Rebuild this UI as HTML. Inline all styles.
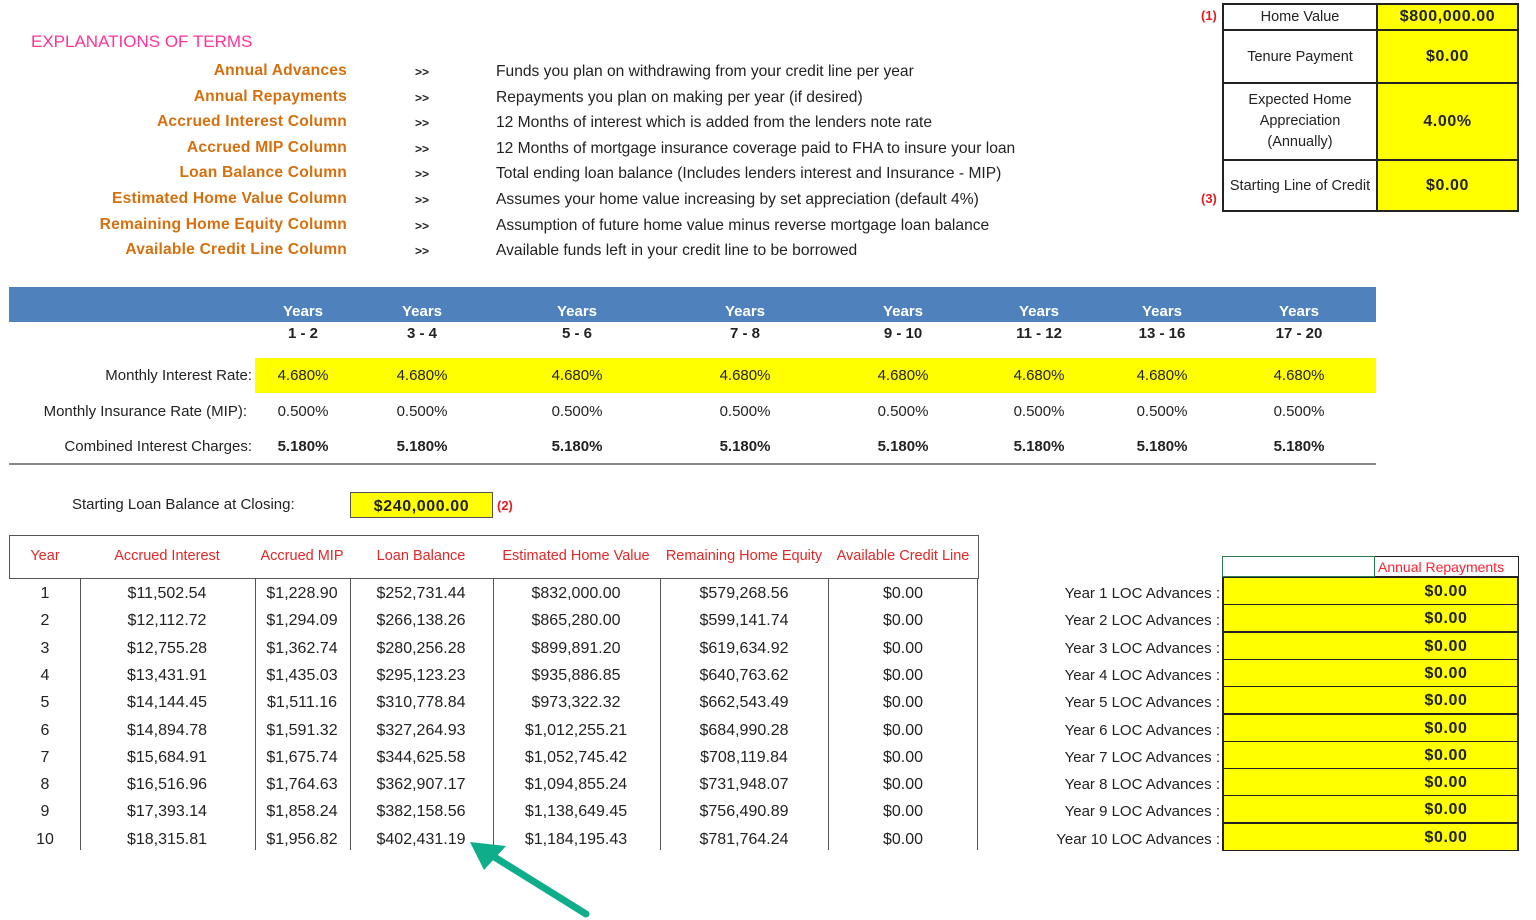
<!DOCTYPE html>
<html><head><meta charset="utf-8"><style>
body{margin:0;width:1536px;height:920px;background:#fff;position:relative;overflow:hidden;font-family:"Liberation Sans",sans-serif;color:#222}
.a{position:absolute;white-space:nowrap}
.lbl{right:1189px;color:#d5700f;font-weight:bold;font-size:15.6px;letter-spacing:0.2px}
.gt{left:415px;font-size:12px;font-weight:bold}
.ds{left:496px;font-size:15.6px}
.c{position:absolute;transform:translateX(-50%);white-space:nowrap}
.yr{color:#fff;font-weight:bold;font-size:15px}
.rg{font-weight:bold;font-size:15px}
.r{font-size:15px}
.b{font-size:16px}
.v{font-weight:bold;font-size:16px;letter-spacing:0.6px}
table{border-collapse:collapse;position:absolute}
</style></head><body>
<div class="a" style="left:31px;top:32px;color:#ff3399;font-size:17px">EXPLANATIONS OF TERMS</div>
<div class="a lbl" style="top:62px">Annual Advances</div>
<div class="a lbl" style="top:88px">Annual Repayments</div>
<div class="a lbl" style="top:113px">Accrued Interest Column</div>
<div class="a lbl" style="top:139px">Accrued MIP Column</div>
<div class="a lbl" style="top:164px">Loan Balance Column</div>
<div class="a lbl" style="top:190px">Estimated Home Value Column</div>
<div class="a lbl" style="top:216px">Remaining Home Equity Column</div>
<div class="a lbl" style="top:241px">Available Credit Line Column</div>
<div class="a gt" style="top:65px">&gt;&gt;</div><div class="a gt" style="top:91px">&gt;&gt;</div><div class="a gt" style="top:116px">&gt;&gt;</div><div class="a gt" style="top:142px">&gt;&gt;</div><div class="a gt" style="top:167px">&gt;&gt;</div><div class="a gt" style="top:193px">&gt;&gt;</div><div class="a gt" style="top:219px">&gt;&gt;</div><div class="a gt" style="top:244px">&gt;&gt;</div>
<div class="a ds" style="top:63px">Funds you plan on withdrawing from your credit line per year</div>
<div class="a ds" style="top:89px">Repayments you plan on making per year (if desired)</div>
<div class="a ds" style="top:114px">12 Months of interest which is added from the lenders note rate</div>
<div class="a ds" style="top:140px">12 Months of mortgage insurance coverage paid to FHA to insure your loan</div>
<div class="a ds" style="top:165px">Total ending loan balance (Includes lenders interest and Insurance - MIP)</div>
<div class="a ds" style="top:191px">Assumes your home value increasing by set appreciation (default 4%)</div>
<div class="a ds" style="top:217px">Assumption of future home value minus reverse mortgage loan balance</div>
<div class="a ds" style="top:242px">Available funds left in your credit line to be borrowed</div>

<div class="a" style="left:1201px;top:8px;color:#e02020;font-weight:bold;font-size:13px">(1)</div>
<div class="a" style="left:1201px;top:191px;color:#e02020;font-weight:bold;font-size:13px">(3)</div>
<table style="left:1222px;top:3px;width:297px;font-size:14.5px;text-align:center">
<tr style="height:26px"><td style="border:2px solid #222;width:150px">Home Value</td><td class="v" style="border:2px solid #222;background:#ff0">$800,000.00</td></tr>
<tr style="height:53px"><td style="border:2px solid #222;border-top:1px solid #999">Tenure Payment</td><td class="v" style="border:2px solid #222;background:#ff0">$0.00</td></tr>
<tr style="height:77px"><td style="border:2px solid #222;border-top:1px solid #999;line-height:21px">Expected Home<br>Appreciation<br>(Annually)</td><td class="v" style="border:2px solid #222;background:#ff0">4.00%</td></tr>
<tr style="height:51px"><td style="border:2px solid #222;border-top:1px solid #999">Starting Line of Credit</td><td class="v" style="border:2px solid #222;background:#ff0">$0.00</td></tr>
</table>

<div class="a" style="left:9px;top:287px;width:1367px;height:35px;background:#4f81bd"></div>
<div class="a" style="left:255px;top:358px;width:1121px;height:35px;background:#ff0"></div>
<div class="a" style="left:9px;top:463px;width:1367px;height:2px;background:#888"></div>
<div class="a r" style="right:1284px;top:367px">Monthly Interest Rate:</div>
<div class="a r" style="right:1289px;top:403px">Monthly Insurance Rate (MIP):</div>
<div class="a r" style="right:1284px;top:438px">Combined Interest Charges:</div>
<div id="cols"></div>

<div class="a r" style="left:72px;top:496px">Starting Loan Balance at Closing:</div>
<div class="a v" style="left:350px;top:492px;width:141px;height:24px;background:#ff0;border:1px solid #555;text-align:center;line-height:27px">$240,000.00</div>
<div class="a" style="left:497px;top:498px;color:#e02020;font-weight:bold;font-size:13px">(2)</div>

<div class="a" style="left:9px;top:535px;width:968px;height:42px;border:1px solid #555"></div>
<div id="main"></div>

<div class="a" style="left:1222px;top:556px;width:151px;height:19px;border:1px solid #2e7d4f"></div>
<div class="a" style="left:1375px;top:556px;width:140px;height:19px;border:1px solid #222;border-left:none;color:#ff2030;font-size:14px;line-height:20px;padding-left:3px">Annual Repayments</div>
<div id="loc"></div>

<svg class="a" style="left:460px;top:830px" width="140" height="90"><line x1="126" y1="84" x2="28" y2="23" stroke="#0fae8a" stroke-width="7" stroke-linecap="round"/><polygon points="10,12 46,16 24,40" fill="#0fae8a"/></svg>

<script>
var xs=[303,422,577,745,903,1039,1162,1299],rg=["1 - 2","3 - 4","5 - 6","7 - 8","9 - 10","11 - 12","13 - 16","17 - 20"],h="";
xs.forEach(function(x,i){h+='<div class="c yr" style="left:'+x+'px;top:303px">Years</div><div class="c rg" style="left:'+x+'px;top:325px">'+rg[i]+'</div><div class="c r" style="left:'+x+'px;top:367px">4.680%</div><div class="c r" style="left:'+x+'px;top:403px">0.500%</div><div class="c r" style="left:'+x+'px;top:438px;font-weight:bold">5.180%</div>';});
document.getElementById('cols').innerHTML=h;
var cx=[45,167,302,421,576,744,903],hd=["Year","Accrued Interest","Accrued MIP","Loan Balance","Estimated Home Value","Remaining Home Equity","Available Credit Line"];
var d=[["$11,502.54","$1,228.90","$252,731.44","$832,000.00","$579,268.56"],["$12,112.72","$1,294.09","$266,138.26","$865,280.00","$599,141.74"],["$12,755.28","$1,362.74","$280,256.28","$899,891.20","$619,634.92"],["$13,431.91","$1,435.03","$295,123.23","$935,886.85","$640,763.62"],["$14,144.45","$1,511.16","$310,778.84","$973,322.32","$662,543.49"],["$14,894.78","$1,591.32","$327,264.93","$1,012,255.21","$684,990.28"],["$15,684.91","$1,675.74","$344,625.58","$1,052,745.42","$708,119.84"],["$16,516.96","$1,764.63","$362,907.17","$1,094,855.24","$731,948.07"],["$17,393.14","$1,858.24","$382,158.56","$1,138,649.45","$756,490.89"],["$18,315.81","$1,956.82","$402,431.19","$1,184,195.43","$781,764.24"]];
h="";
hd.forEach(function(t,i){h+='<div class="c" style="left:'+cx[i]+'px;top:548px;color:#e02828;font-size:14.5px">'+t+'</div>';});
[80,255,350,493,660,828,977].forEach(function(x){h+='<div class="a" style="left:'+x+'px;top:578px;width:1px;height:272px;background:#555"></div>';});
d.forEach(function(r,i){var y=585+i*27.3;var v=[String(i+1)].concat(r).concat(["$0.00"]);v.forEach(function(t,j){h+='<div class="c b" style="left:'+cx[j]+'px;top:'+y+'px">'+t+'</div>';});});
document.getElementById('main').innerHTML=h;
h="";
for(var i=0;i<10;i++){var y=577+i*27.3;h+='<div class="a r" style="right:316px;top:'+(y+8)+'px">Year '+(i+1)+' LOC Advances :</div><div class="a" style="left:1222px;top:'+y+'px;width:151px;height:26px;background:#ff0;border:1px solid #222;border-width:1px 2px"></div><div class="a v" style="left:1375px;top:'+y+'px;width:142px;height:26px;background:#ff0;border:1px solid #222;border-width:1px 2px 1px 0;text-align:center;line-height:27px">$0.00</div>';}
document.getElementById('loc').innerHTML=h;
</script>
</body></html>
